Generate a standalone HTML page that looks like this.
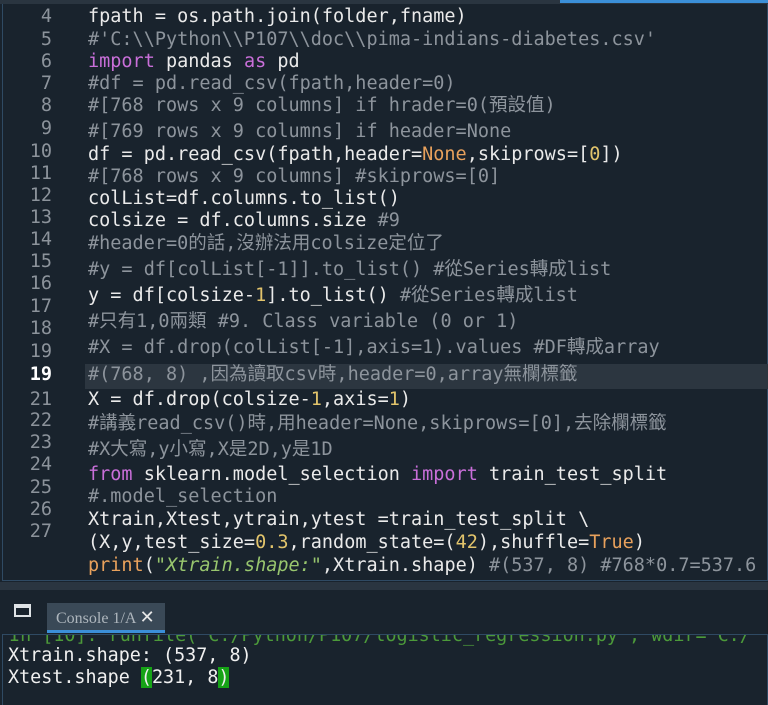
<!DOCTYPE html>
<html><head><meta charset="utf-8"><style>
body{margin:0;width:768px;height:703px;background:#19232d;overflow:hidden;position:relative;font-family:"DejaVu Sans Mono","Noto Sans CJK TC",monospace;}
.ed{position:absolute;left:2px;top:4px;width:764px;height:576px;border:1px solid #2f4a63;border-top:none;background:#19232d;}
.l,.n{position:absolute;font-size:18.5px;white-space:pre;line-height:22px;}
.n{width:52px;text-align:right;left:0;color:#8c939b;}
.l{left:88px;color:#eaeaea;}
.c{color:#8d949c}
.k{color:#c96fd9}
.o{color:#e8a15c}
.y{color:#e2c46c}
.s{color:#98c66e;font-style:italic}
.cur{position:absolute;left:85px;top:364px;width:683px;height:25px;background:#2c3640;}
</style></head><body>
<div style="position:absolute;left:0;top:0;width:768px;height:4px;background:#2a3540"></div>
<div style="position:absolute;left:560px;top:0;width:208px;height:3px;background:#3b8fd8"></div>
<div class="ed"></div>
<div class="cur"></div>
<div class="n" style="top:6px">4</div>
<div class="n" style="top:29px">5</div>
<div class="n" style="top:51px">6</div>
<div class="n" style="top:73px">7</div>
<div class="n" style="top:95px">8</div>
<div class="n" style="top:118px">9</div>
<div class="n" style="top:141px">10</div>
<div class="n" style="top:163px">11</div>
<div class="n" style="top:185px">12</div>
<div class="n" style="top:207px">13</div>
<div class="n" style="top:229px">14</div>
<div class="n" style="top:251px">15</div>
<div class="n" style="top:273px">16</div>
<div class="n" style="top:296px">17</div>
<div class="n" style="top:318px">18</div>
<div class="n" style="top:341px">19</div>
<div class="n" style="top:364px;color:#fff;font-weight:bold">19</div>
<div class="n" style="top:389px">21</div>
<div class="n" style="top:410px">22</div>
<div class="n" style="top:432px">23</div>
<div class="n" style="top:454px">24</div>
<div class="n" style="top:477px">25</div>
<div class="n" style="top:499px">26</div>
<div class="n" style="top:521px">27</div>

<div class="l" style="top:6px">fpath = os.path.join(folder,fname)</div>
<div class="l c" style="top:29px">#'C:\\Python\\P107\\doc\\pima-indians-diabetes.csv'</div>
<div class="l" style="top:51px"><span class="k">import</span> pandas <span class="k">as</span> pd</div>
<div class="l c" style="top:73px">#df = pd.read_csv(fpath,header=0)</div>
<div class="l c" style="top:95px">#[768 rows x 9 columns] if hrader=0(預設值)</div>
<div class="l c" style="top:121px">#[769 rows x 9 columns] if header=None</div>
<div class="l" style="top:144px">df = pd.read_csv(fpath,header=<span class="o">None</span>,skiprows=[<span class="y">0</span>])</div>
<div class="l c" style="top:166px">#[768 rows x 9 columns] #skiprows=[0]</div>
<div class="l" style="top:188px">colList=df.columns.to_list()</div>
<div class="l" style="top:210px">colsize = df.columns.size <span class="c">#9</span></div>
<div class="l c" style="top:233px">#header=0的話,沒辦法用colsize定位了</div>
<div class="l c" style="top:259px">#y = df[colList[-1]].to_list() #從Series轉成list</div>
<div class="l" style="top:285px">y = df[colsize-<span class="y">1</span>].to_list() <span class="c">#從Series轉成list</span></div>
<div class="l c" style="top:311px">#只有1,0兩類 #9. Class variable (0 or 1)</div>
<div class="l c" style="top:337px">#X = df.drop(colList[-1],axis=1).values #DF轉成array</div>
<div class="l c" style="top:364px">#(768, 8) ,因為讀取csv時,header=0,array無欄標籤</div>
<div class="l" style="top:389px">X = df.drop(colsize-<span class="y">1</span>,axis=<span class="y">1</span>)</div>
<div class="l c" style="top:413px">#講義read_csv()時,用header=None,skiprows=[0],去除欄標籤</div>
<div class="l c" style="top:439px">#X大寫,y小寫,X是2D,y是1D</div>
<div class="l" style="top:464px"><span class="k">from</span> sklearn.model_selection <span class="k">import</span> train_test_split</div>
<div class="l c" style="top:486px">#.model_selection</div>
<div class="l" style="top:509px">Xtrain,Xtest,ytrain,ytest =train_test_split \</div>
<div class="l" style="top:532px">(X,y,test_size=<span class="y">0.3</span>,random_state=(<span class="y">42</span>),shuffle=<span class="o">True</span>)</div>
<div class="l" style="top:555px"><span class="o">print</span>(<span class="s">"Xtrain.shape:"</span>,Xtrain.shape) <span class="c">#(537, 8) #768*0.7=537.6</span></div>

<div style="position:absolute;left:0;top:582px;width:768px;height:8px;background:#2a3540"></div>
<div style="position:absolute;left:14px;top:604px;width:17px;height:13px;border:2px solid #dfe3e6;border-top-width:4px;box-sizing:border-box"></div>
<div style="position:absolute;left:47px;top:603px;width:118px;height:30px;background:#3a4957;border-bottom:3px solid #3b8fd8;box-sizing:border-box;color:#aeb6bd;font-family:'Liberation Serif',serif;font-size:16px;line-height:28px;padding-left:9px">Console 1/A <span style="color:#e6e6e6;font-family:'Liberation Sans';font-size:18px">✕</span></div>
<div style="position:absolute;left:2px;top:634px;width:764px;height:70px;border:1px solid #2f4a63;border-bottom:none;overflow:hidden">
<div style="position:absolute;left:6px;top:-10px;font-size:18.4px;color:#4c9a3a;white-space:pre">In [10]: runfile('C:/Python/P107/logistic_regression.py', wdir='C:/</div>
</div>
<div style="position:absolute;left:8px;top:645px;font-size:18.4px;line-height:22px;color:#f0f0f0;white-space:pre">Xtrain.shape: (537, 8)
Xtest.shape <span style="background:#16a316">(</span>231, 8<span style="background:#16a316">)</span></div>
</body></html>
